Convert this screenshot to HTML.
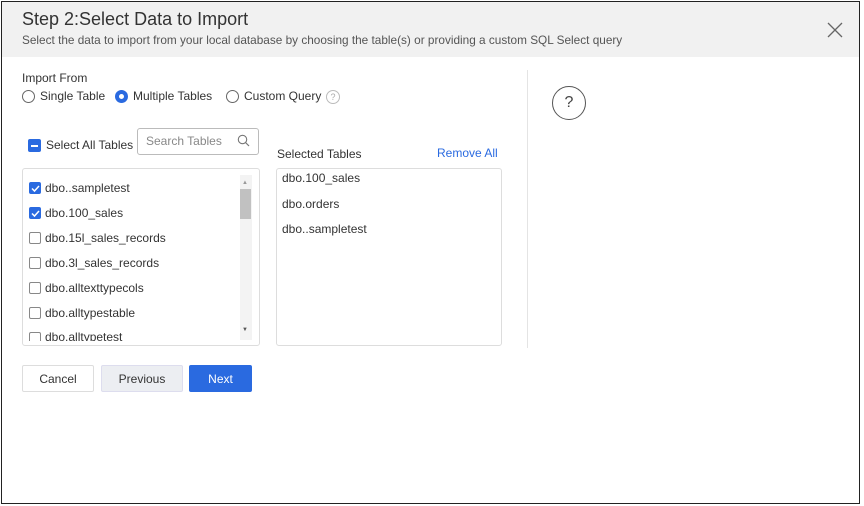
<!DOCTYPE html>
<html><head><style>
*{box-sizing:border-box;margin:0;padding:0}
body{width:864px;height:506px;background:#fff;font-family:"Liberation Sans",sans-serif;position:relative;overflow:hidden;color:#333}
.frame{position:absolute;left:1px;top:1px;width:859px;height:503px;border:1px solid #222}
.hdr{position:absolute;left:2px;top:2px;width:857px;height:55px;background:#f1f1f1}
.t{position:absolute;left:22px;top:9px;font-size:18px;color:#333}
.s{position:absolute;left:22px;top:33px;font-size:11.8px;color:#555}
.abs{position:absolute;white-space:nowrap}
.rad{position:absolute;width:13px;height:13px;border:1px solid #666;border-radius:50%}
.cb{position:absolute;width:12px;height:12px;border:1px solid #888;border-radius:2px;background:#fff}
.cb.on{background:#2a6ae0;border-color:#2a6ae0}
.box{position:absolute;border:1px solid #ddd;border-radius:3px}
.li{position:absolute;left:45px;font-size:12px;color:#333}
.btn{position:absolute;top:365px;height:27px;font-size:12px;text-align:center;line-height:26px;border-radius:2px}
</style></head><body>
<div class="frame"></div>
<div class="hdr"></div>
<div class="t">Step 2:Select Data to Import</div>
<div class="s">Select the data to import from your local database by choosing the table(s) or providing a custom SQL Select query</div>
<svg class="abs" style="left:827px;top:22px" width="16" height="16"><path d="M1 1L15 15M15 1L1 15" stroke="#666" stroke-width="1.3"/></svg>
<div class="abs" style="left:22px;top:71px;font-size:12px">Import From</div>
<div class="rad" style="left:22px;top:90px"></div>
<div class="abs" style="left:40px;top:89px;font-size:12px">Single Table</div>
<div class="rad" style="left:115px;top:90px;border:4px solid #2a6ae0"></div>
<div class="abs" style="left:133px;top:89px;font-size:12px">Multiple Tables</div>
<div class="rad" style="left:226px;top:90px"></div>
<div class="abs" style="left:244px;top:89px;font-size:12px">Custom Query</div>
<div class="abs" style="left:326px;top:90px;width:14px;height:14px;border:1px solid #bbb;border-radius:50%;font-size:9px;color:#aaa;text-align:center;line-height:12px">?</div>
<div class="abs" style="left:28px;top:139px;width:13px;height:13px;background:#2a6ae0;border-radius:2px"><div style="position:absolute;left:3px;top:6px;width:7px;height:2px;background:#fff"></div></div>
<div class="abs" style="left:46px;top:138px;font-size:12px">Select All Tables</div>
<div class="box" style="left:137px;top:128px;width:122px;height:27px;border-color:#bbb"></div>
<div class="abs" style="left:146px;top:134px;font-size:12px;color:#888">Search Tables</div>
<svg class="abs" style="left:237px;top:134px" width="13" height="13"><circle cx="5.5" cy="5.5" r="4.2" fill="none" stroke="#777" stroke-width="1.1"/><path d="M8.5 8.5L12 12" stroke="#777" stroke-width="1.2"/></svg>
<div class="box" style="left:22px;top:168px;width:238px;height:178px;overflow:hidden">
</div>
<div class="abs" style="left:240px;top:175px;width:12px;height:165px;background:#f3f3f3"></div>
<div class="abs" style="left:240px;top:189px;width:11px;height:30px;background:#c1c1c1"></div>
<div class="abs" style="left:242px;top:180px;font-size:6px;color:#999">▲</div>
<div class="abs" style="left:242px;top:327px;font-size:6px;color:#555">▼</div>
<div class="cb on" style="left:29px;top:182px"></div><svg class="abs" style="left:30px;top:183px" width="11" height="11"><path d="M2 5.5L4.5 8L9 3" stroke="#fff" stroke-width="1.5" fill="none"/></svg>
<div class="li" style="top:181px">dbo..sampletest</div>
<div class="cb on" style="left:29px;top:207px"></div><svg class="abs" style="left:30px;top:208px" width="11" height="11"><path d="M2 5.5L4.5 8L9 3" stroke="#fff" stroke-width="1.5" fill="none"/></svg>
<div class="li" style="top:206px">dbo.100_sales</div>
<div class="cb" style="left:29px;top:232px"></div><div class="li" style="top:231px">dbo.15l_sales_records</div>
<div class="cb" style="left:29px;top:257px"></div><div class="li" style="top:256px">dbo.3l_sales_records</div>
<div class="cb" style="left:29px;top:282px"></div><div class="li" style="top:281px">dbo.alltexttypecols</div>
<div class="cb" style="left:29px;top:307px"></div><div class="li" style="top:306px">dbo.alltypestable</div>
<div class="abs" style="left:23px;top:330px;width:216px;height:11px;overflow:hidden"><div class="cb" style="left:6px;top:2px"></div><div class="li" style="left:22px;top:0px">dbo.alltypetest</div></div>
<div class="abs" style="left:277px;top:147px;font-size:12px">Selected Tables</div>
<div class="abs" style="left:437px;top:146px;font-size:12px;color:#2a6ae0">Remove All</div>
<div class="box" style="left:276px;top:168px;width:226px;height:178px"></div>
<div class="abs" style="left:282px;top:171px;font-size:12px">dbo.100_sales</div>
<div class="abs" style="left:282px;top:197px;font-size:12px">dbo.orders</div>
<div class="abs" style="left:282px;top:222px;font-size:12px">dbo..sampletest</div>
<div class="abs" style="left:527px;top:70px;width:1px;height:278px;background:#e4e4e4"></div>
<div class="abs" style="left:552px;top:86px;width:34px;height:34px;border:1px solid #555;border-radius:50%;text-align:center;line-height:32px;font-size:16px;color:#444">?</div>
<div class="btn" style="left:22px;width:72px;border:1px solid #ddd;background:#fff">Cancel</div>
<div class="btn" style="left:101px;width:82px;border:1px solid #dde;background:#eceef2">Previous</div>
<div class="btn" style="left:189px;width:63px;background:#2a6ae0;color:#fff;border:1px solid #2a6ae0">Next</div>
</body></html>
